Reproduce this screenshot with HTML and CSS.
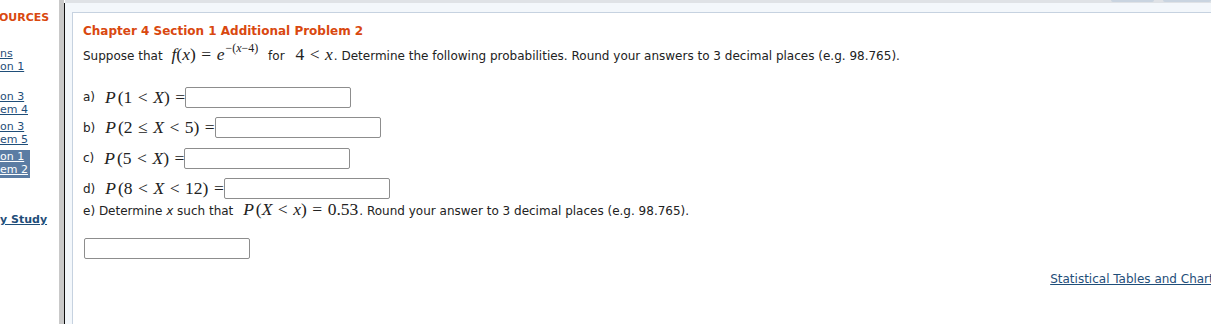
FILE: index.html
```html
<!DOCTYPE html>
<html>
<head>
<meta charset="utf-8">
<link rel="stylesheet" href="styles.css">
</head>
<body>
<div class="page">
  <aside class="sidebar">
    <div class="res">OURCES</div>
    <div class="links">
      <a class="lk g1" href="#">ns<br>on 1</a>
      <a class="lk g2" href="#">on 3<br>em 4</a>
      <a class="lk g3" href="#">on 3<br>em 5</a>
      <a class="lk g4 sel" href="#">on 1<br>em 2</a>
      <a class="lk study" href="#">y Study</a>
    </div>
  </aside>
  <div class="split"></div>
  <div class="edge"></div>
  <main class="content">
    <div class="topstrip"><span class="tab t1"></span><span class="tab t2"></span></div>
    <div class="panelwrap">
      <section class="panel">
        <h1 class="title">Chapter 4 Section 1 Additional Problem 2</h1>
        <p class="intro">Suppose that <span class="m"><i>f</i>(<i>x</i>)<span class="rel">=</span><i>e</i><sup>−(<i>x</i>−4)</sup></span> for <span class="m m2">4<span class="rel">&lt;</span><i>x</i></span>. Determine the following probabilities. Round your answers to 3 decimal places (e.g. 98.765).</p>
        <div class="q">a) <span class="m"><i>P</i><span class="op">(</span>1<span class="rel">&lt;</span><i>X</i>)<span class="rel">=</span></span><span class="box"></span></div>
        <div class="q">b) <span class="m"><i>P</i><span class="op">(</span>2<span class="rel">≤</span><i>X</i><span class="rel">&lt;</span>5)<span class="rel">=</span></span><span class="box"></span></div>
        <div class="q">c) <span class="m"><i>P</i><span class="op">(</span>5<span class="rel">&lt;</span><i>X</i>)<span class="rel">=</span></span><span class="box"></span></div>
        <div class="q">d) <span class="m"><i>P</i><span class="op">(</span>8<span class="rel">&lt;</span><i>X</i><span class="rel">&lt;</span>12)<span class="rel">=</span></span><span class="box"></span></div>
        <div class="qe">e) Determine <i class="xv">x</i> such that <span class="m"><i>P</i><span class="op">(</span><i>X</i><span class="rel">&lt;</span><i>x</i>)<span class="rel">=</span>0.53</span>. Round your answer to 3 decimal places (e.g. 98.765).</div>
        <div class="ebox"><span class="box"></span></div>
        <div class="foot"><a href="#" class="stat">Statistical Tables and Charts</a></div>
      </section>
    </div>
  </main>
</div>
</body>
</html>
```
FILE: styles.css
```css
* { box-sizing: border-box; }
html, body { margin: 0; padding: 0; background: #fff; }
body { font-family: "DejaVu Sans", Verdana, sans-serif; font-size: 12px; color: #222; overflow: hidden; }
.page { display: flex; height: 324px; width: 1211px; }
.sidebar { width: 59px; flex: none; overflow: hidden; background: #fff; white-space: nowrap; }
.res { color: #d9480f; font-weight: bold; font-size: 11px; margin-top: 11px; line-height: 13px; margin-left: -1px; }
.links { display: flex; flex-direction: column; align-items: flex-start; margin-top: 24px; }
.lk { color: #1f4e79; text-decoration: underline; font-size: 11px; line-height: 12.5px; display: block; }
.g2 { margin-top: 18px; }
.g3 { margin-top: 5px; }
.g4 { margin-top: 4px; }
.sel { background: #5b7ca3; color: #fff; padding: 1px 2px 2px 0; }
.study { font-weight: bold; margin-top: 36px; }
.split { width: 5px; flex: none; background: #c9c9c9; }
.edge { width: 1px; flex: none; background: #111; margin-top: 3px; }
.content { flex: 1; display: flex; flex-direction: column; background: #f3f7fb; min-width: 0; }
.topstrip { height: 3px; background: #dfe2e6; display: flex; flex: none; }
.tab { height: 2px; background: #c9d4e0; border-radius: 0 0 3px 3px; }
.t1 { width: 54px; margin-left: 1046px; }
.t2 { width: 60px; margin-left: 9px; }
.panelwrap { flex: 1; padding: 9px 0 0 7px; display: flex; }
.panel { flex: 1; background: #fff; border-top: 1px solid #c6d2e0; border-left: 1px solid #c6d2e0; padding: 11px 0 0 10px; white-space: nowrap; min-width: 0; }
.title { margin: 0; font-size: 12px; font-weight: bold; color: #d9480f; line-height: 14px; }
.intro { margin: 6px 0 0; line-height: 20px; }
.m { font-family: "Liberation Serif", "Times New Roman", serif; font-size: 17.5px; margin: 0 4px 0 5px; }
.m2 { margin: 0 1px 0 7px; }
.m i { font-style: italic; }
.rel { margin: 0 5.5px; }
.op { margin-left: 2px; }
sup { font-size: 12px; vertical-align: 8px; line-height: 0; margin-left: 1px; margin-right: 2px; }
.q { display: flex; align-items: center; height: 21px; margin-top: 9.6px; }
.intro + .q { margin-top: 20.5px; }
.q .m { margin: 0 0 0 10px; }
.q .m .rel:last-child { margin-right: 0; }
.box { display: inline-block; width: 166px; height: 21px; border: 1px solid #8d8d8d; border-radius: 2px; background: #fff; }
.qe { margin-top: 0; line-height: 20px; }
.xv { font-style: italic; }
.qe .m { margin: 0 1px 0 6px; }
.ebox { margin-top: 17px; display: flex; padding-left: 1px; }
.foot { display: flex; justify-content: flex-end; margin-top: 13px; margin-right: -9px; }
.stat { color: #1f4e79; text-decoration: underline; font-size: 12px; }
```
